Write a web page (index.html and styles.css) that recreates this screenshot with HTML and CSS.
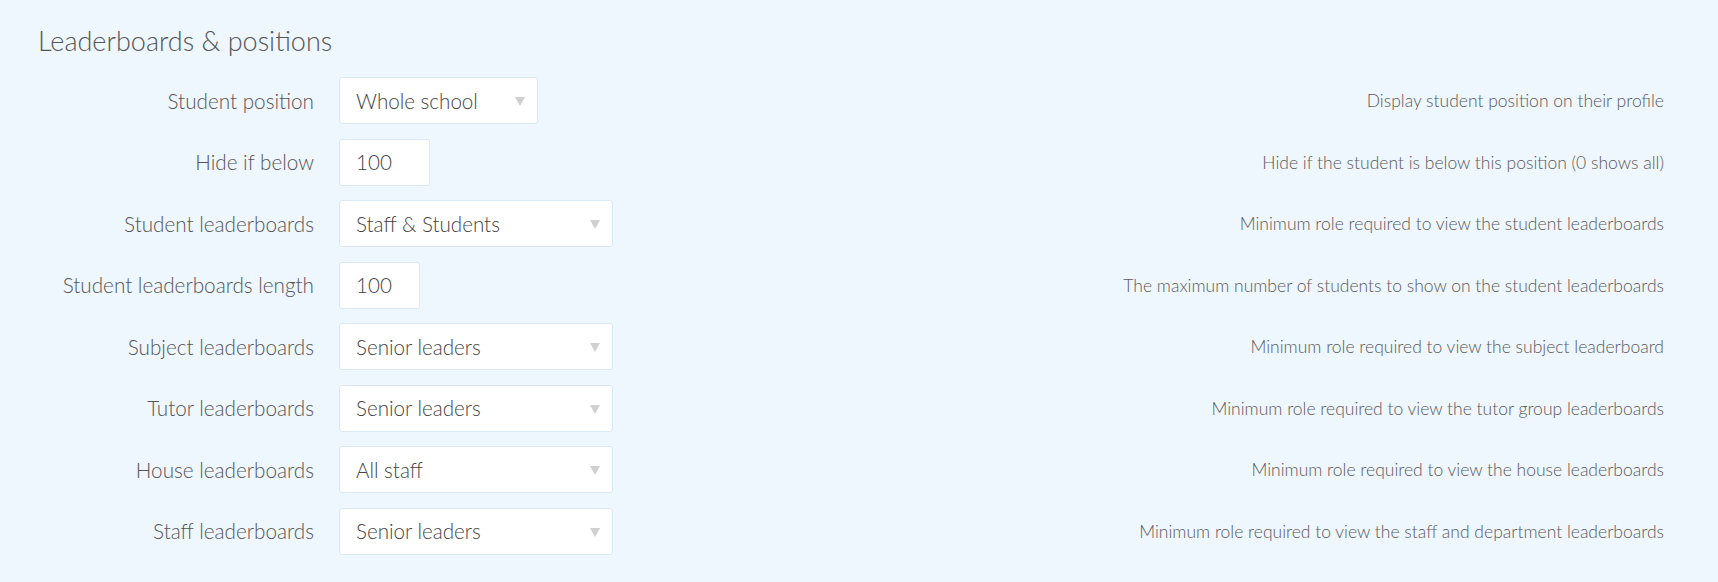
FILE: index.html
```html
<!DOCTYPE html>
<html lang="en">
<head>
    <meta charset="UTF-8" />
    <title>Leaderboards &amp; positions</title>
    <link rel="stylesheet" href="styles.css">
</head>
<body>
<div class="settings">
    <h2 class="section-title">Leaderboards &amp; positions</h2>
    <div class="settings-grid">
        <label class="field-label">Student position</label>
        <div class="field"><div class="select w-whole">Whole school<span class="caret"></span></div></div>
        <div class="field-help">Display student position on their profile</div>

        <label class="field-label">Hide if below</label>
        <div class="field"><div class="input w-hide">100</div></div>
        <div class="field-help">Hide if the student is below this position (0 shows all)</div>

        <label class="field-label">Student leaderboards</label>
        <div class="field"><div class="select w-role">Staff &amp; Students<span class="caret"></span></div></div>
        <div class="field-help">Minimum role required to view the student leaderboards</div>

        <label class="field-label">Student leaderboards length</label>
        <div class="field"><div class="input w-length">100</div></div>
        <div class="field-help">The maximum number of students to show on the student leaderboards</div>

        <label class="field-label">Subject leaderboards</label>
        <div class="field"><div class="select w-role">Senior leaders<span class="caret"></span></div></div>
        <div class="field-help">Minimum role required to view the subject leaderboard</div>

        <label class="field-label">Tutor leaderboards</label>
        <div class="field"><div class="select w-role">Senior leaders<span class="caret"></span></div></div>
        <div class="field-help">Minimum role required to view the tutor group leaderboards</div>

        <label class="field-label">House leaderboards</label>
        <div class="field"><div class="select w-role">All staff<span class="caret"></span></div></div>
        <div class="field-help">Minimum role required to view the house leaderboards</div>

        <label class="field-label">Staff leaderboards</label>
        <div class="field"><div class="select w-role">Senior leaders<span class="caret"></span></div></div>
        <div class="field-help">Minimum role required to view the staff and department leaderboards</div>
    </div>
</div>
</body>
</html>
```

FILE: styles.css
```css
html, body { margin: 0; padding: 0; }
body {
    background: #eef6fe;
    font-family: 'Lato Light', 'Lato', 'Open Sans', sans-serif;
    font-weight: 300;
    color: #555;
}
.settings { padding: 24px 54px 0 38px; }
.section-title {
    margin: 0 0 19px 0;
    font-size: 27px; font-weight: 300; color: #555;
    line-height: 34px;
}
.settings-grid {
    display: grid;
    grid-template-columns: 276px auto 1fr;
    column-gap: 25px; row-gap: 14.5px;
    align-items: center;
}
.field-label { text-align: right; font-size: 20.7px; color: #555; }
.field { display: flex; }
.field-help { text-align: right; font-size: 17.5px; color: #5a5a5a; }
.select, .input {
    box-sizing: border-box; height: 47px;
    display: flex; align-items: center;
    background: #fff; border: 1px solid #dbe8f6; border-radius: 3px;
    padding: 0 16px; font-size: 20.6px; color: #444;
    position: relative;
}
.caret {
    position: absolute; right: 12px; top: 19px;
    width: 0; height: 0;
    border-left: 5px solid transparent; border-right: 5px solid transparent;
    border-top: 9px solid #d0d0d0;
}
.w-whole { width: 199px; }
.w-hide { width: 91px; }
.w-length { width: 81px; }
.w-role { width: 274px; }
```
